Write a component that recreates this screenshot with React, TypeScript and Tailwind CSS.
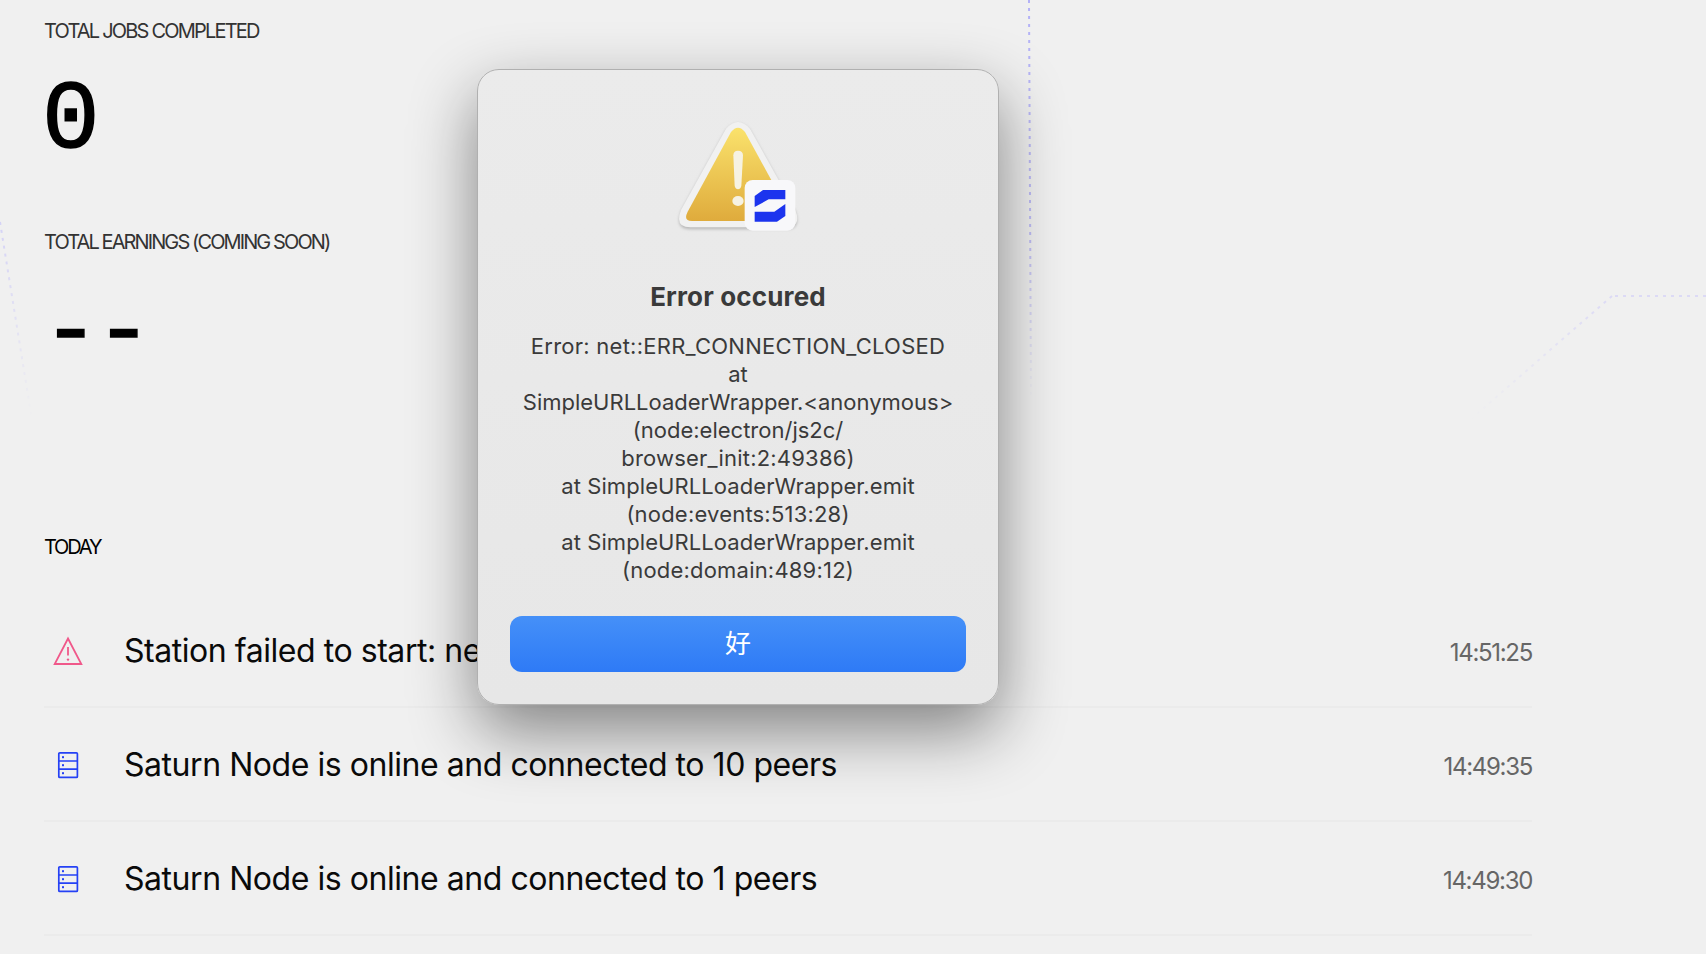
const rows = [
  { kind: "warn", text: "Station failed to start: net::ERR_CONNECTION_CLOSED", time: "14:51:25" },
  { kind: "node", text: "Saturn Node is online and connected to 10 peers", time: "14:49:35" },
  { kind: "node", text: "Saturn Node is online and connected to 1 peers", time: "14:49:30" },
];

const messageLines = [
  { text: "Error: net::ERR_CONNECTION_CLOSED", cls: "tracking-[0.25px]" },
  { text: "at", cls: "" },
  { text: "SimpleURLLoaderWrapper.<anonymous>", cls: "" },
  { text: "(node:electron/js2c/", cls: "" },
  { text: "browser_init:2:49386)", cls: "tracking-[0.2px]" },
  { text: "at SimpleURLLoaderWrapper.emit", cls: "tracking-[0.08px]" },
  { text: "(node:events:513:28)", cls: "tracking-[0.2px]" },
  { text: "at SimpleURLLoaderWrapper.emit", cls: "tracking-[0.08px]" },
  { text: "(node:domain:489:12)", cls: "tracking-[0.2px]" },
];

function WarnIcon() {
  return (
    <svg width="30" height="30" viewBox="0 0 30 30" fill="none" stroke="#f0588a" strokeWidth="1.8">
      <path d="M15 2.5 L28.3 28 H1.7 Z" strokeLinejoin="miter" />
      <path d="M15 11 V19.5" />
      <circle cx="15" cy="23.6" r="1.2" fill="#f0588a" stroke="none" />
    </svg>
  );
}

function NodeIcon() {
  return (
    <svg width="30" height="30" viewBox="0 0 30 30" fill="none" stroke="#2541f5" strokeWidth="1.7">
      <rect x="5.8" y="2.8" width="18.6" height="24.6" rx="1" />
      <path d="M5.8 11 H24.4 M5.8 19.2 H24.4" />
      <rect x="9" y="6.2" width="2" height="2" fill="#2541f5" stroke="none" />
      <rect x="9" y="14.2" width="2" height="2" fill="#2541f5" stroke="none" />
      <rect x="9" y="22.2" width="2" height="2" fill="#2541f5" stroke="none" />
    </svg>
  );
}

function AlertIcon() {
  return (
    <svg width="150" height="130" viewBox="8 0 450 390">
      <defs>
        <linearGradient id="tri" x1="0" y1="0" x2="0" y2="1">
          <stop offset="0" stopColor="#fae26c" />
          <stop offset="1" stopColor="#dfab3c" />
        </linearGradient>
        <filter id="soft" x="-10%" y="-10%" width="120%" height="120%">
          <feGaussianBlur stdDeviation="4" />
        </filter>
      </defs>
      <path d="M197 60 Q233 20 269 60 L405 304 Q425 358 375 358 L90 358 Q42 358 62 304 Z" fill="#b8b8b8" filter="url(#soft)" />
      <path d="M197 56 Q233 16 269 56 L405 300 Q425 352 375 352 L90 352 Q42 352 62 300 Z" fill="#f1f1f1" />
      <path d="M212 66 Q233 40 254 66 L385 305 Q397 333 370 333 L95 333 Q68 333 82 305 Z" fill="url(#tri)" />
      <path d="M219 136 Q219 122 233 122 Q248 122 248 136 L243 228 Q240 238 233 238 Q226 238 223 228 Z" fill="#f6f2e2" />
      <ellipse cx="233" cy="273" rx="17" ry="15" fill="#f6f2e2" />
      <rect x="253" y="210" width="152" height="152" rx="24" fill="#f8f8fa" />
      <path d="M375 240 V268 H325 L283 291 V258 L308 240 Z" fill="#1c34ee" />
      <path d="M283 305 H342 L375 282 V318 L350 335 H283 Z" fill="#1c34ee" />
    </svg>
  );
}

function Backdrop() {
  return (
    <svg className="absolute inset-0" width="1706" height="954" fill="none" strokeDasharray="3 5" strokeWidth="2">
      <defs>
        <linearGradient id="fadeV" gradientUnits="userSpaceOnUse" x1="1029" y1="0" x2="1029" y2="400">
          <stop offset="0" stopColor="#b3b1f7" />
          <stop offset="0.6" stopColor="#bfbdf4" />
          <stop offset="1" stopColor="#f0f0f0" />
        </linearGradient>
        <linearGradient id="fadeL" gradientUnits="userSpaceOnUse" x1="0" y1="220" x2="32" y2="420">
          <stop offset="0" stopColor="#d4d2f6" />
          <stop offset="1" stopColor="#f0f0f0" />
        </linearGradient>
        <linearGradient id="fadeR" gradientUnits="userSpaceOnUse" x1="1612" y1="296" x2="1470" y2="420">
          <stop offset="0" stopColor="#dcdaf5" />
          <stop offset="1" stopColor="#f0f0f0" />
        </linearGradient>
      </defs>
      <path d="M1029 0 L1031 400" stroke="url(#fadeV)" />
      <path d="M0 222 L32 420" stroke="url(#fadeL)" />
      <path d="M1706 296 H1612" stroke="#dcdaf5" />
      <path d="M1612 296 L1470 420" stroke="url(#fadeR)" />
    </svg>
  );
}

export default function App() {
  return (
    <div className="relative w-[1706px] h-[954px] overflow-hidden bg-[#f0f0f0] font-['Inter',sans-serif]">
      <Backdrop />

      <main className="relative w-[1488px] ml-[44px] pt-[19px]">
        <h2 className="h-[24px] leading-[24px] text-[20px] tracking-[-1.8px] text-[#333]">TOTAL JOBS COMPLETED</h2>
        <p className="h-[106px] mt-[26px] leading-[106px] text-[96px] font-['Liberation_Mono',monospace] text-black -ml-[2px] [-webkit-text-stroke:1.5px_#000]">0</p>
        <h2 className="h-[24px] mt-[55px] leading-[24px] text-[20px] tracking-[-1.9px] text-[#333]">TOTAL EARNINGS (COMING SOON)</h2>
        <p className="h-[106px] mt-[27px] leading-[106px] text-[96px] tracking-[-4.5px] font-['Liberation_Mono',monospace] text-black -ml-[2px] [-webkit-text-stroke:1.5px_#000]">--</p>
        <h2 className="h-[24px] mt-[148px] leading-[24px] text-[20px] tracking-[-2.2px] text-black">TODAY</h2>

        <ul className="mt-[35px]">
          {rows.map((r) => (
            <li key={r.time} className="h-[114px] pt-[2px] flex items-center border-b-2 border-[#ebebeb]">
              <span className="w-[80px] pl-[9px] shrink-0">
                {r.kind === "warn" ? <WarnIcon /> : <NodeIcon />}
              </span>
              <span className="flex-1 text-[32px] tracking-[-0.45px] text-[#0a0a0a] whitespace-nowrap">{r.text}</span>
              <span className="pt-[4px] text-[24px] tracking-[-1.3px] text-[#666]">{r.time}</span>
            </li>
          ))}
        </ul>
      </main>

      <div
        role="alertdialog"
        className="absolute left-[477px] top-[69px] w-[522px] h-[636px] flex flex-col items-center rounded-[22px] border border-[#b0b0b0] bg-gradient-to-b from-[#ebebeb] to-[#e7e7e7] shadow-[0_26px_66px_rgba(0,0,0,0.46)] pt-[40px] px-[32px] text-[#3a3a3a]"
      >
        <AlertIcon />
        <h1 className="mt-[42px] h-[30px] leading-[30px] text-[26px] font-bold tracking-[0.15px]">Error occured</h1>
        <div className="mt-[20px] w-full text-center text-[22px] leading-[28px]">
          {messageLines.map((l, i) => (
            <div key={i} className={l.cls}>{l.text}</div>
          ))}
        </div>
        <button className="mt-[32px] w-[456px] h-[56px] pb-[5px] rounded-[12px] bg-gradient-to-b from-[#4590f8] to-[#2e7af6] text-white text-[26px] font-['Noto_Sans_CJK_SC',sans-serif] leading-none">
          好
        </button>
      </div>
    </div>
  );
}
